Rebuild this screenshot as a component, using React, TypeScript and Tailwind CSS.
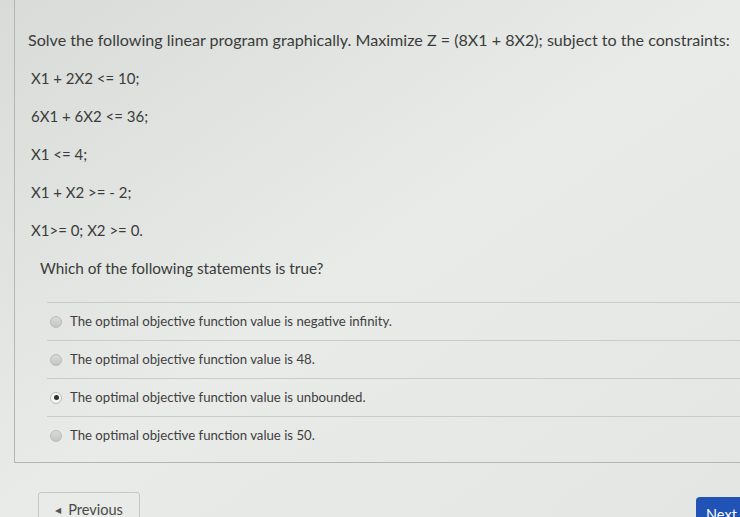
import React from 'react';

const constraints = [
  'X1 + 2X2 <= 10;',
  '6X1 + 6X2 <= 36;',
  'X1 <= 4;',
  'X1 + X2 >= - 2;',
  'X1>= 0; X2 >= 0.',
];

const options = [
  'The optimal objective function value is negative infinity.',
  'The optimal objective function value is 48.',
  'The optimal objective function value is unbounded.',
  'The optimal objective function value is 50.',
];

const Radio: React.FC<{ checked?: boolean }> = ({ checked }) => (
  <span className="w-[12px] h-[12px] rounded-full border border-[#b9bbb9] bg-gradient-to-b from-[#d9dbd9] to-[#c4c6c4] flex items-center justify-center shrink-0">
    {checked && (
      <span className="w-[10px] h-[10px] rounded-full bg-[#f4f5f4] flex items-center justify-center">
        <span className="w-[5px] h-[5px] rounded-full bg-[#2f3130]" />
      </span>
    )}
  </span>
);

const App: React.FC = () => {
  const selected = 2;

  return (
    <div className="w-[740px] h-[517px] overflow-hidden bg-gradient-to-br from-[#d8dbd7] via-[#e9ebe8] to-[#e3e6e2] font-['Lato','Open_Sans',sans-serif] text-[#3a3c3b]">
      {/* question panel */}
      <div className="ml-[14px] pt-[21px] pl-[13px] border-l border-b border-[#b3b6b2]">
        <div className="h-[38px] flex items-center text-[16.1px] whitespace-nowrap">
          Solve the following linear program graphically. Maximize Z = (8X1 + 8X2); subject to the constraints:
        </div>
        {constraints.map((c, i) => (
          <div key={i} className="h-[38px] flex items-center pl-[3px] text-[15px]">
            {c}
          </div>
        ))}
        <div className="h-[38px] flex items-center pl-[12px] text-[15.3px]">
          Which of the following statements is true?
        </div>

        <div className="mt-[15px] ml-[19px]">
          {options.map((o, i) => (
            <div
              key={i}
              className={`flex items-center gap-[8px] pl-[3px] border-t border-[#c9ccc8] text-[13.2px] text-[#3e403f] ${i === options.length - 1 ? 'h-[46px] pb-[8px]' : 'h-[38px]'}`}
            >
              <Radio checked={i === selected} />
              <span>{o}</span>
            </div>
          ))}
        </div>
      </div>

      {/* nav buttons */}
      <div className="flex justify-between items-start mt-[29px] pl-[38px]">
        <button className="w-[102px] h-[36px] flex items-center justify-center gap-[7px] border border-[#c6c8c5] rounded-[3px] bg-[#e9ebe8] text-[14.5px] text-[#484a49]">
          <span className="text-[8px] text-[#555]">◀</span>
          <span>Previous</span>
        </button>
        <button className="mt-[5px] w-[44px] h-[36px] flex items-start pt-[7px] pl-[10px] rounded-tl-[4px] bg-[#2152b6] text-[14.5px] text-white">
          Next
        </button>
      </div>
    </div>
  );
};

export default App;
